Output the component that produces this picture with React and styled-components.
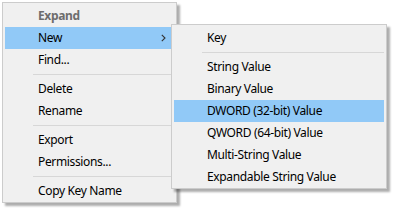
import styled, { createGlobalStyle } from "styled-components";

const GlobalStyle = createGlobalStyle`
  html, body {
    margin: 0;
    padding: 0;
    background: #ffffff;
  }
  body {
    font-family: "Noto Sans", "Liberation Sans", Arial, sans-serif;
    font-size: 12px;
  }
`;

const mainItems = [
  { label: "Expand", bold: true },
  { label: "New", sub: true, active: true },
  { label: "Find..." },
  { sep: true },
  { label: "Delete" },
  { label: "Rename" },
  { sep: true },
  { label: "Export" },
  { label: "Permissions..." },
  { sep: true },
  { label: "Copy Key Name" },
];

const subItems = [
  { label: "Key" },
  { sep: true },
  { label: "String Value" },
  { label: "Binary Value" },
  { label: "DWORD (32-bit) Value", active: true },
  { label: "QWORD (64-bit) Value" },
  { label: "Multi-String Value" },
  { label: "Expandable String Value" },
];

function Chevron() {
  return (
    <svg width="5" height="8" viewBox="0 0 5 8">
      <path d="M0.8 0.8 L4 4 L0.8 7.2" fill="none" stroke="#333" strokeWidth="1.1" />
    </svg>
  );
}

function MenuList({ items, children }) {
  return items.map((it, i) =>
    it.sep ? (
      <Separator key={i} />
    ) : (
      <Item key={i} $active={it.active} $bold={it.bold}>
        <Label>{it.label}</Label>
        {it.sub && (
          <Arrow>
            <Chevron />
          </Arrow>
        )}
        {it.sub && children}
      </Item>
    )
  );
}

export default function App() {
  return (
    <>
      <GlobalStyle />
      <Page>
        <Menu $width={175}>
          <MenuList items={mainItems}>
            <Flyout>
              <Menu $width={216}>
                <MenuList items={subItems} />
              </Menu>
            </Flyout>
          </MenuList>
        </Menu>
      </Page>
    </>
  );
}

const Page = styled.div`
  padding: 2px;
  width: 394px;
  height: 210px;
  box-sizing: border-box;
  overflow: hidden;
`;

const Menu = styled.div`
  box-sizing: border-box;
  width: ${(p) => p.$width}px;
  background: #f0f0f0;
  border: 1px solid #cccccc;
  padding: 2px 2px 0;
  display: flex;
  flex-direction: column;
  box-shadow: 3px 3px 2px rgba(0, 0, 0, 0.32);
`;

const Item = styled.div`
  position: relative;
  height: 22px;
  display: flex;
  align-items: center;
  padding-left: 33px;
  background: ${(p) => (p.$active ? "#91c9f7" : "transparent")};
  color: ${(p) => (p.$bold ? "#6d6d6d" : "#000000")};
  font-weight: ${(p) => (p.$bold ? 700 : 400)};
`;

const Label = styled.span`
  line-height: 22px;
  white-space: nowrap;
  letter-spacing: -0.35px;
`;

const Arrow = styled.span`
  position: absolute;
  right: 8px;
  top: 7px;
  display: flex;
`;

const Flyout = styled.div`
  position: absolute;
  left: 166px;
  top: -3px;
  z-index: 2;
  font-weight: 400;
  color: #000;
`;

const Separator = styled.div`
  height: 7px;
  display: flex;
  align-items: center;
  padding-left: 28px;
  &::after {
    content: "";
    flex: 1;
    height: 1px;
    background: #d7d7d7;
  }
`;
